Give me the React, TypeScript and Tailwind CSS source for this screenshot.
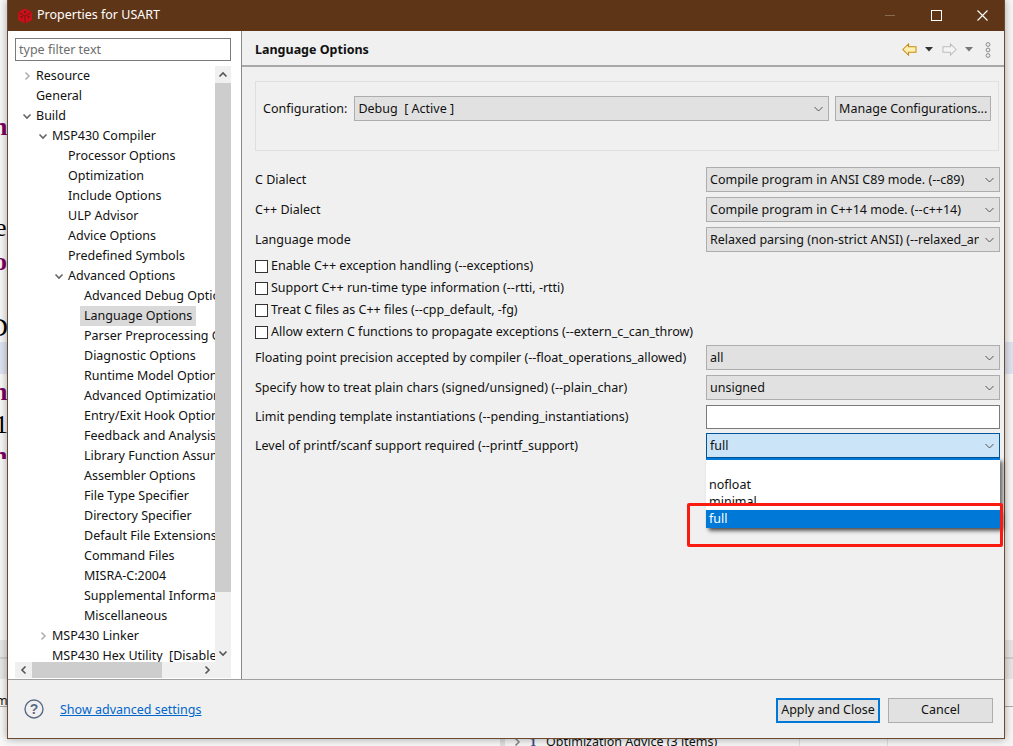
import React from "react";

const tree: [string, number, string][] = [
  ["Resource", 0, "r"],
  ["General", 0, ""],
  ["Build", 0, "d"],
  ["MSP430 Compiler", 1, "d"],
  ["Processor Options", 2, ""],
  ["Optimization", 2, ""],
  ["Include Options", 2, ""],
  ["ULP Advisor", 2, ""],
  ["Advice Options", 2, ""],
  ["Predefined Symbols", 2, ""],
  ["Advanced Options", 2, "d"],
  ["Advanced Debug Options", 3, ""],
  ["Language Options", 3, "s"],
  ["Parser Preprocessing Options", 3, ""],
  ["Diagnostic Options", 3, ""],
  ["Runtime Model Options", 3, ""],
  ["Advanced Optimizations", 3, ""],
  ["Entry/Exit Hook Options", 3, ""],
  ["Feedback and Analysis", 3, ""],
  ["Library Function Assumptions", 3, ""],
  ["Assembler Options", 3, ""],
  ["File Type Specifier", 3, ""],
  ["Directory Specifier", 3, ""],
  ["Default File Extensions", 3, ""],
  ["Command Files", 3, ""],
  ["MISRA-C:2004", 3, ""],
  ["Supplemental Information", 3, ""],
  ["Miscellaneous", 3, ""],
  ["MSP430 Linker", 1, "r"],
  ["MSP430 Hex Utility  [Disabled]", 1, ""],
];
const indent = ["pl-[21px]", "pl-[37px]", "pl-[53px]", "pl-[69px]"];
const arrowPos = ["left-[7px]", "left-[23px]", "left-[39px]", "left-[55px]"];

function Chev({ dir, color = "#6f6f6f", cls = "" }: { dir: "d" | "r" | "u" | "l"; color?: string; cls?: string }) {
  const p = {
    d: "M1.5 3.5 L5 7 L8.5 3.5",
    u: "M1.5 6.5 L5 3 L8.5 6.5",
    r: "M3.5 1.5 L7 5 L3.5 8.5",
    l: "M6.5 1.5 L3 5 L6.5 8.5",
  }[dir];
  return (
    <svg width="10" height="10" viewBox="0 0 10 10" className={cls}>
      <path d={p} fill="none" stroke={color} strokeWidth="1.6" />
    </svg>
  );
}

function Combo({ text, active, wide }: { text: string; active?: boolean; wide?: boolean }) {
  return (
    <div
      className={`${wide ? "w-[475px]" : "w-[294px]"} h-[25px] shrink-0 flex items-center pl-[3px] pr-[5px] border ${
        active ? "bg-[#cce4f7] border-[#005499]" : "bg-[#e1e1e1] border-[#adadad]"
      }`}
    >
      <span className="overflow-hidden flex-1 whitespace-pre pt-px">{text}</span>
      <svg width="9" height="6" viewBox="0 0 9 6" className="ml-[6px] shrink-0">
        <path d="M0.5 1 L4.5 5 L8.5 1" fill="none" stroke="#555" strokeWidth="1" />
      </svg>
    </div>
  );
}

function Row({ label, children, down }: { label: string; children: React.ReactNode; down?: boolean }) {
  return (
    <div className="flex items-center justify-between">
      <span className={down ? "pt-[2px]" : "pt-px"}>{label}</span>
      {children}
    </div>
  );
}

function Check({ label }: { label: string }) {
  return (
    <div className="flex items-center gap-[3px] h-[22px]">
      <div className="w-[13px] h-[13px] bg-white border border-[#333]" />
      <span>{label}</span>
    </div>
  );
}

const serifPurple = "absolute text-[26px] leading-[26px] text-[#7a0060] font-bold font-['Liberation_Serif',serif]";
const serifBlack = "absolute text-[26px] leading-[26px] text-black font-['Liberation_Serif',serif]";

export default function App() {
  return (
    <div className="relative w-[1013px] h-[746px] overflow-hidden bg-[#f7f7f7] text-[12.5px] text-[#111] font-['Noto_Sans','Open_Sans',sans-serif]">
      {/* Window behind the dialog */}
      <div className="absolute left-0 top-[342px] w-full h-[32px] bg-[#dde3f0]" />
      <div className="absolute left-0 top-[640px] w-full h-[39px] bg-[#e6e6e6]" />
      <div className="absolute left-0 top-[657px] w-full h-[2px] bg-[#cfcfcf]" />
      <div className="absolute left-0 top-[706px] w-full h-px bg-[#aaaaaa]" />
      <div className={`${serifPurple} left-[-7px] top-[114px]`}>n</div>
      <div className={`${serifBlack} left-[-5px] top-[215px]`}>e</div>
      <div className={`${serifPurple} left-[-6px] top-[249px]`}>o</div>
      <div className={`${serifBlack} left-[-11px] top-[315px]`}>D</div>
      <div className={`${serifPurple} left-[-7px] top-[379px]`}>n</div>
      <div className={`${serifBlack} left-[-5px] top-[412px]`}>1</div>
      <div className="absolute left-0 top-[452px] w-[8px] h-[7px] overflow-hidden">
        <div className={`${serifPurple} left-[-7px] top-[-9px]`}>n</div>
      </div>
      <div className="absolute left-[-4px] top-[692px] whitespace-nowrap">m</div>
      <div className="absolute left-[500px] top-[738px] w-[513px] h-[8px] bg-[#f5f5f5]" />
      <div className="absolute left-[500px] top-[738px] w-[5px] h-[8px] bg-[#dddddd]" />
      <div className="absolute left-[799px] top-[738px] w-px h-[8px] bg-[#dddddd]" />
      <div className="absolute left-[887px] top-[738px] w-px h-[8px] bg-[#dddddd]" />
      <div className="absolute left-[512px] top-[737px]">
        <Chev dir="r" color="#8a8a8a" />
      </div>
      <div className="absolute left-[530px] top-[733px] font-bold text-[#35508a] font-['Liberation_Serif',serif]">1</div>
      <div className="absolute left-[546px] top-[733px] whitespace-nowrap">Optimization Advice (3 items)</div>

      {/* Dialog */}
      <div className="absolute left-[7px] top-0 w-[998px] h-[739px] flex flex-col border border-t-0 border-[#6b4a30] bg-[#f0f0f0] shadow-[0_0_8px_rgba(0,0,0,0.35)]">
        {/* Title bar */}
        <div className="h-[31px] shrink-0 bg-[#5f3517] text-white flex items-center pl-[9px]">
          <svg width="16" height="16" viewBox="0 0 16 16" className="mr-[4px]">
            <path d="M8 0.5 L15 4 V12 L8 15.5 L1 12 V4 Z" fill="#c8101a" />
            <path d="M1.5 4.5 L8 8 L14.5 4.5 M8 8 V15" fill="none" stroke="#5f1a10" strokeWidth="0.7" />
            <circle cx="8" cy="4" r="1" fill="#5f1a10" />
            <circle cx="4.5" cy="9" r="0.9" fill="#5f1a10" />
            <circle cx="11.5" cy="9" r="0.9" fill="#5f1a10" />
          </svg>
          <span>Properties for USART</span>
          <div className="ml-auto flex items-center -mr-px">
            <div className="w-[46px] h-[31px] flex items-center justify-center">
              <div className="w-[10px] h-px bg-[#8a6a50]" />
            </div>
            <div className="w-[46px] h-[31px] flex items-center justify-center">
              <div className="w-[11px] h-[11px] border border-white" />
            </div>
            <div className="w-[46px] h-[31px] flex items-center justify-center">
              <svg width="11" height="11" viewBox="0 0 11 11">
                <path d="M0.5 0.5 L10.5 10.5 M10.5 0.5 L0.5 10.5" stroke="#fff" strokeWidth="1.1" />
              </svg>
            </div>
          </div>
        </div>

        {/* Body */}
        <div className="flex flex-1 min-h-0">
          {/* Left */}
          <div className="w-[234px] shrink-0 bg-white border-r border-[#8a8a8a] pl-[7px] pr-[10px] pt-[7px] pb-px flex flex-col">
            <div className="h-[23px] shrink-0 border border-[#7a7a7a] pl-[3px] pt-px flex items-center text-[#6d6d6d]">type filter text</div>
            <div className="mt-[5px] flex flex-1 min-h-0">
              <div className="flex-1 min-w-0 overflow-hidden">
                {tree.map(([t, lvl, kind]) => (
                  <div key={t} className={`relative h-5 flex items-center whitespace-pre ${indent[lvl]}`}>
                    {(kind === "r" || kind === "d") && (
                      <span className={`absolute ${arrowPos[lvl]} top-[5px]`}>
                        <Chev dir={kind as "r" | "d"} color={kind === "r" ? "#b0b0b0" : "#666"} />
                      </span>
                    )}
                    <span className={kind === "s" ? "bg-[#d9d9d9] h-5 leading-5 -ml-[4px] px-[4px]" : ""}>{t}</span>
                  </div>
                ))}
              </div>
              <div className="w-[16px] shrink-0 flex flex-col bg-[#f0f0f0]">
                <div className="h-[17px] flex items-center justify-center">
                  <Chev dir="u" color="#555" />
                </div>
                <div className="h-[509px] bg-[#cdcdcd]" />
                <div className="flex-1 flex items-end justify-center pb-[4px]">
                  <Chev dir="d" color="#555" />
                </div>
              </div>
            </div>
            <div className="h-[16px] shrink-0 bg-[#f0f0f0] flex items-center">
              <div className="w-[17px] flex justify-center"><Chev dir="l" color="#555" /></div>
              <div className="w-[130px] h-full bg-[#cdcdcd]" />
              <div className="flex-1" />
              <div className="w-[17px] flex justify-center mr-[16px]"><Chev dir="r" color="#555" /></div>
            </div>
          </div>

          {/* Right */}
          <div className="flex-1 min-w-0 flex flex-col">
            <div className="h-[36px] shrink-0 border-b-2 border-[#a8a8a8] flex items-center pl-[13px] pr-[13px] pt-[3px]">
              <span className="font-bold pt-px">Language Options</span>
              <div className="ml-auto flex items-center">
                <svg width="15" height="13" viewBox="0 0 16 14">
                  <path d="M0.8 7 L7 1 V4 H15 V10 H7 V13 Z" fill="#fdf0b0" stroke="#c88a10" strokeWidth="1.1" />
                </svg>
                <svg width="8" height="5" viewBox="0 0 8 5" className="ml-[8px]"><path d="M0 0 H8 L4 4.5 Z" fill="#333" /></svg>
                <svg width="15" height="13" viewBox="0 0 16 14" className="ml-[9px]">
                  <path d="M15.2 7 L9 1 V4 H1 V10 H9 V13 Z" fill="#f4f4f4" stroke="#bdbdbd" strokeWidth="1.1" />
                </svg>
                <svg width="8" height="5" viewBox="0 0 8 5" className="ml-[8px]"><path d="M0 0 H8 L4 4.5 Z" fill="#777" /></svg>
                <svg width="6" height="16" viewBox="0 0 6 16" className="ml-[12px]">
                  <circle cx="3" cy="2.5" r="1.9" fill="none" stroke="#8a8a8a" />
                  <circle cx="3" cy="8" r="1.9" fill="none" stroke="#8a8a8a" />
                  <circle cx="3" cy="13.5" r="1.9" fill="none" stroke="#8a8a8a" />
                </svg>
              </div>
            </div>

            <div className="flex-1 min-h-0 pl-[13px] pr-[4px] pt-[14px]">
              <div className="h-[70px] border border-[#dfdfdf] flex items-start pl-[7px] pr-[7px] pt-[14px] mr-[1px]">
                <span className="h-[25px] pt-px flex items-center mr-[7px]">Configuration:</span>
                <Combo wide text="Debug  [ Active ]" />
                <div className="ml-[6px] flex-1 h-[25px] pt-px bg-[#e1e1e1] border border-[#adadad] flex items-center justify-center whitespace-nowrap">
                  Manage Configurations...
                </div>
              </div>

              <div className="mt-[16px] flex flex-col gap-[5px]">
                <Row down label="C Dialect"><Combo text="Compile program in ANSI C89 mode. (--c89)" /></Row>
                <Row down label="C++ Dialect"><Combo text="Compile program in C++14 mode. (--c++14)" /></Row>
                <Row down label="Language mode"><Combo text="Relaxed parsing (non-strict ANSI) (--relaxed_ansi)" /></Row>
              </div>

              <div className="mt-[3px] flex flex-col">
                <Check label="Enable C++ exception handling (--exceptions)" />
                <Check label="Support C++ run-time type information (--rtti, -rtti)" />
                <Check label="Treat C files as C++ files (--cpp_default, -fg)" />
                <Check label="Allow extern C functions to propagate exceptions (--extern_c_can_throw)" />
              </div>

              <div className="mt-[2px] flex flex-col gap-[5px]">
                <Row label="Floating point precision accepted by compiler (--float_operations_allowed)"><Combo text="all" /></Row>
                <Row label="Specify how to treat plain chars (signed/unsigned) (--plain_char)"><Combo text="unsigned" /></Row>
              </div>
              <div className="mt-[5px] flex flex-col gap-[4px]">
                <Row label="Limit pending template instantiations (--pending_instantiations)">
                  <div className="w-[294px] h-[24px] bg-white border border-[#7a7a7a]" />
                </Row>
                <Row label="Level of printf/scanf support required (--printf_support)"><Combo active text="full" /></Row>
              </div>
            </div>
          </div>
        </div>

        {/* Footer */}
        <div className="h-[59px] shrink-0 border-t border-[#a0a0a0] flex items-center pl-[16px] pr-[11px] pt-[3px]">
          <svg width="20" height="20" viewBox="0 0 20 20" className="-mt-[3px]">
            <circle cx="10" cy="10" r="9" fill="none" stroke="#5c6b85" strokeWidth="1.4" />
            <text x="10" y="15" textAnchor="middle" fontSize="14" fontWeight="700" fill="#5c6b85" fontFamily="Liberation Sans, sans-serif">?</text>
          </svg>
          <span className="ml-[16px] text-[#0066cc] underline">Show advanced settings</span>
          <div className="ml-auto w-[104px] h-[25px] border-2 border-[#0078d7] bg-[#e1e1e1] flex items-center justify-center whitespace-nowrap">Apply and Close</div>
          <div className="ml-[8px] w-[105px] h-[25px] border border-[#adadad] bg-[#e1e1e1] flex items-center justify-center">Cancel</div>
        </div>
      </div>

      {/* Open dropdown */}
      <div className="absolute left-[706px] top-[458px] w-[294px] h-[68px] bg-white border-t-2 border-[#0078d7] shadow-[3px_3px_4px_rgba(0,0,0,0.55)] flex flex-col pl-[3px] pt-[16px] leading-[17px]">
        <div>nofloat</div>
        <div>minimal</div>
      </div>
      <div className="absolute left-[706px] top-[510px] w-[294px] h-[18px] bg-[#0078d7] text-white pl-[3px] leading-[18px] shadow-[3px_3px_4px_rgba(0,0,0,0.45)]">full</div>

      {/* Annotation */}
      <div className="absolute left-[687px] top-[503px] w-[316px] h-[44px] border-[3px] border-[#fb1a10] rounded-[2px]" />
    </div>
  );
}
